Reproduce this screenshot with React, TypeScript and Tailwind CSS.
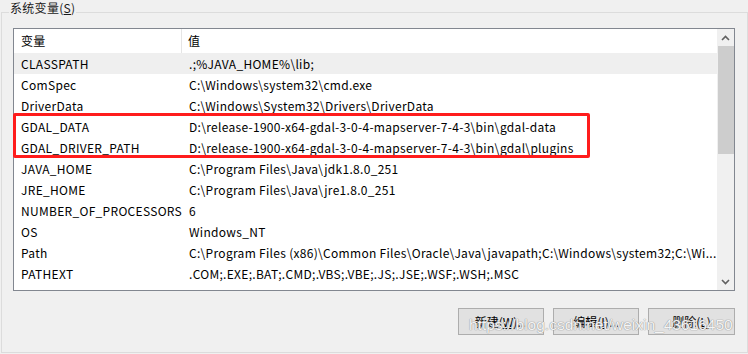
import React from "react";

const rows: [string, string][] = [
  ["CLASSPATH", ".;%JAVA_HOME%\\lib;"],
  ["ComSpec", "C:\\Windows\\system32\\cmd.exe"],
  ["DriverData", "C:\\Windows\\System32\\Drivers\\DriverData"],
  ["GDAL_DATA", "D:\\release-1900-x64-gdal-3-0-4-mapserver-7-4-3\\bin\\gdal-data"],
  ["GDAL_DRIVER_PATH", "D:\\release-1900-x64-gdal-3-0-4-mapserver-7-4-3\\bin\\gdal\\plugins"],
  ["JAVA_HOME", "C:\\Program Files\\Java\\jdk1.8.0_251"],
  ["JRE_HOME", "C:\\Program Files\\Java\\jre1.8.0_251"],
  ["NUMBER_OF_PROCESSORS", "6"],
  ["OS", "Windows_NT"],
  ["Path", "C:\\Program Files (x86)\\Common Files\\Oracle\\Java\\javapath;C:\\Windows\\system32;C:\\Wi..."],
  ["PATHEXT", ".COM;.EXE;.BAT;.CMD;.VBS;.VBE;.JS;.JSE;.WSF;.WSH;.MSC"],
];

export default function App() {
  return (
    <div
      className="relative w-[748px] h-[354px] overflow-hidden bg-[#f0f0f0] text-[12px] text-black tracking-[0.3px]"
      style={{ fontFamily: '"Noto Sans CJK SC", "Noto Sans", sans-serif' }}
    >
      <div className="relative ml-[1px] mt-[12px] w-[747px] h-[341px] border border-[#dcdcdc] pl-[11px] pt-[15px]">
        <div className="absolute left-[7px] top-[-13px] bg-[#f0f0f0] px-[1px] leading-[16px] text-[#1a1a1a]">
          系统变量(<span className="underline">S</span>)
        </div>
        {/* list */}
        <div className="flex w-[722px] h-[263px] border border-[#828790] bg-white">
          <div className="flex flex-col flex-1">
            <div className="flex h-[24px] items-center bg-white">
              <div className="w-[168px] h-full pl-[7px] flex items-center border-r border-[#e5e5e5]">变量</div>
              <div className="pl-[6px]">值</div>
            </div>
            {rows.map(([n, v], i) => (
              <div
                key={n}
                className={`flex h-[21px] items-center whitespace-nowrap ${i === 0 ? "bg-[#efefef]" : "bg-white"}`}
              >
                <div className="w-[169px] pl-[7px]">{n}</div>
                <div className="pl-[6px]">{v}</div>
              </div>
            ))}
          </div>
          {/* scrollbar */}
          <div className="flex flex-col w-[17px] bg-[#f0f0f0]">
            <div className="h-[17px] flex items-center justify-center">
              <svg width="9" height="6" viewBox="0 0 9 6">
                <path d="M1 5 L4.5 1.5 L8 5" fill="none" stroke="#606060" strokeWidth="1.6" />
              </svg>
            </div>
            <div className="ml-[1px] h-[108px] bg-[#cdcdcd]" />
            <div className="flex-1" />
            <div className="h-[17px] flex items-center justify-center">
              <svg width="9" height="6" viewBox="0 0 9 6">
                <path d="M1 1 L4.5 4.5 L8 1" fill="none" stroke="#606060" strokeWidth="1.6" />
              </svg>
            </div>
          </div>
        </div>
        {/* buttons */}
        <div className="flex justify-end gap-[9px] w-[722px] mt-[17px] tracking-normal">
          <button className="w-[86px] h-[27px] bg-[#e1e1e1] border border-[#adadad]">
            新建(<span className="underline">W</span>)...
          </button>
          <button className="w-[86px] h-[27px] bg-[#e1e1e1] border border-[#adadad]">
            编辑(<span className="underline">I</span>)...
          </button>
          <button className="w-[87px] h-[27px] bg-[#e1e1e1] border border-[#adadad]">
            删除(<span className="underline">L</span>)
          </button>
        </div>
      </div>
      {/* red highlight */}
      <div className="absolute left-[13px] top-[113px] w-[577px] h-[45px] border-[3px] border-[#ff1c1c] rounded-[2px]" />
      {/* watermark */}
      <div
        className="absolute left-[469px] top-[316px] text-[15.5px] leading-[18px] text-white/90 whitespace-nowrap tracking-normal"
        style={{ fontFamily: '"Liberation Sans", Arial, sans-serif', textShadow: "0 0 1px #8c8c8c, 0 0 1px #8c8c8c" }}
      >
        https://blog.csdn.net/weixin_43616450
      </div>
    </div>
  );
}
